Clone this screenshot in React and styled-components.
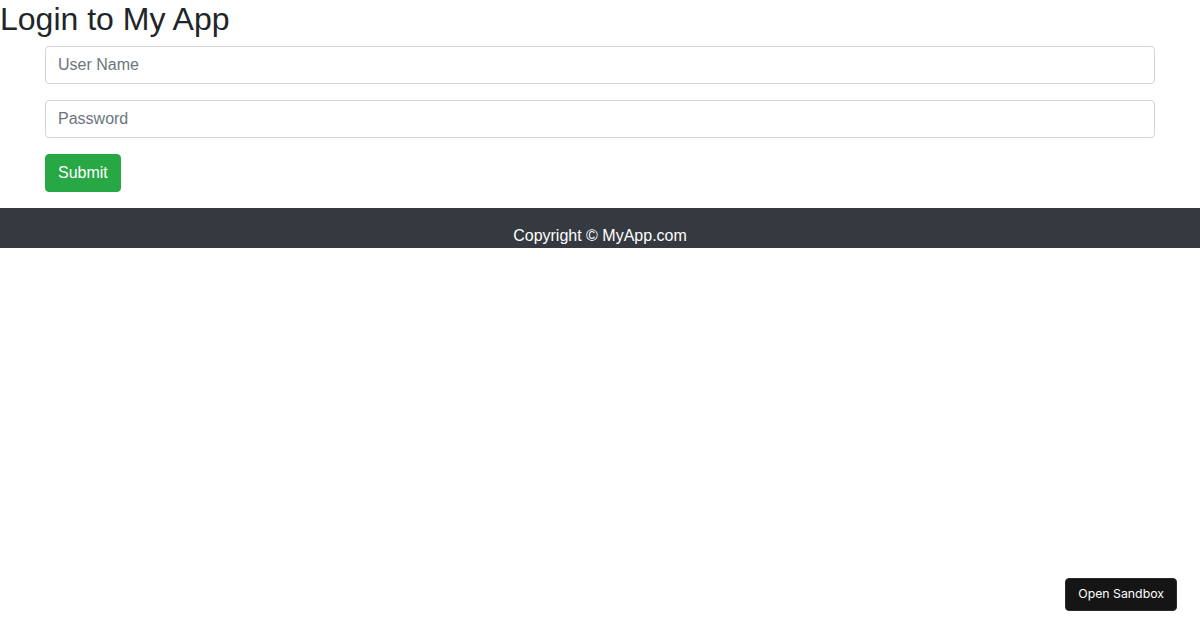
import React from "react"
import styled, { createGlobalStyle } from "styled-components"

const GlobalStyle = createGlobalStyle`
  * {
    box-sizing: border-box;
  }

  body {
    margin: 0;
    font-family: "Liberation Sans", Arial, sans-serif;
    font-size: 16px;
    line-height: 1.5;
    color: #212529;
    background: #fff;
  }
`

const Title = styled.h2`
  margin: 0 0 8px;
  font-size: 32px;
  font-weight: 400;
  line-height: 1.2;
  color: #212529;
`

const Container = styled.form`
  width: 100%;
  max-width: 1140px;
  margin: 0 auto;
  padding: 0 15px;
`

const FormGroup = styled.div`
  margin-bottom: 16px;
`

const Input = styled.input`
  display: block;
  width: 100%;
  height: 38px;
  padding: 6px 12px;
  font-family: inherit;
  font-size: 16px;
  line-height: 1.5;
  color: #495057;
  background: #fff;
  border: 1px solid #ced4da;
  border-radius: 4px;
  outline: none;

  &::placeholder {
    color: #6c757d;
    opacity: 1;
  }
`

const Button = styled.button`
  display: inline-block;
  height: 38px;
  padding: 6px 12px;
  margin-bottom: 16px;
  font-family: inherit;
  font-size: 16px;
  line-height: 1.5;
  color: #fff;
  background: ${(props) => (props.$variant === "success" ? "#28a745" : "#007bff")};
  border: 1px solid ${(props) => (props.$variant === "success" ? "#28a745" : "#007bff")};
  border-radius: 4px;
  cursor: pointer;
`

const Footer = styled.footer`
  height: 40px;
  padding-top: 16px;
  background: #343a40;
  color: #fff;
  text-align: center;
  line-height: 24px;
`

const SandboxButton = styled.a`
  position: fixed;
  right: 23px;
  bottom: 19px;
  display: flex;
  align-items: center;
  height: 33px;
  padding: 0 12px;
  background: #151515;
  border: 1px solid #2a2a2a;
  border-radius: 4px;
  color: #fff;
  font-family: Inter, "Liberation Sans", sans-serif;
  font-size: 12.3px;
  text-decoration: none;
  cursor: pointer;
`

const App = () => {
  return (
    <>
      <GlobalStyle />
      <Title>Login to My App</Title>
      <Container onSubmit={(e) => e.preventDefault()}>
        <FormGroup>
          <Input type="text" placeholder="User Name" />
        </FormGroup>
        <FormGroup>
          <Input type="password" placeholder="Password" />
        </FormGroup>
        <Button type="submit" $variant="success">
          Submit
        </Button>
      </Container>
      <Footer>Copyright © MyApp.com</Footer>
      <SandboxButton>Open Sandbox</SandboxButton>
    </>
  )
}

export default App
